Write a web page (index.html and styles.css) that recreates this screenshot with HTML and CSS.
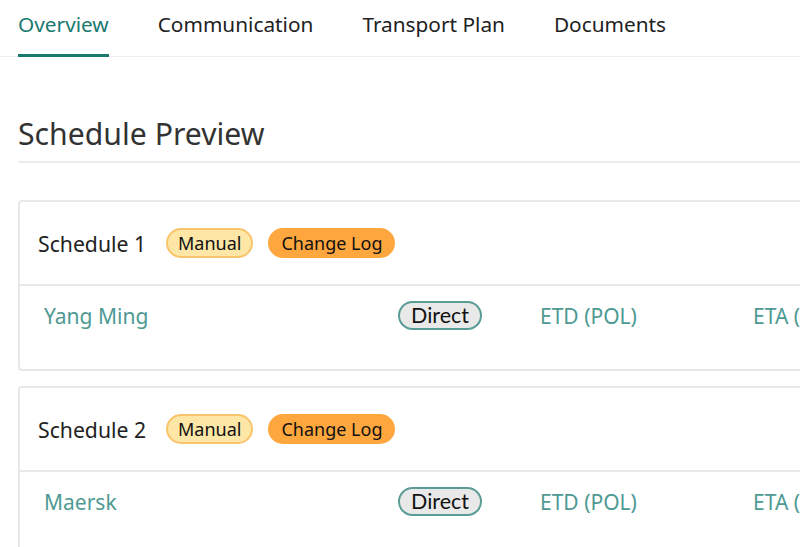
FILE: index.html
```html
<!DOCTYPE html>
<html lang="en">
<head>
<meta charset="utf-8">
<title>Schedule Preview</title>
<link rel="stylesheet" href="styles.css">
</head>
<body>
<div class="page">
  <nav class="tabs">
    <a class="tab active">Overview</a>
    <a class="tab">Communication</a>
    <a class="tab">Transport Plan</a>
    <a class="tab">Documents</a>
  </nav>
  <main class="content">
    <h1 class="title">Schedule Preview</h1>
    <section class="card">
      <header class="card-head">
        <span class="card-name">Schedule 1</span>
        <span class="badge badge-manual">Manual</span>
        <span class="badge badge-log">Change Log</span>
      </header>
      <div class="card-body">
        <span class="carrier">Yang Ming</span>
        <span class="cell"><span class="pill">Direct</span></span>
        <span class="label">ETD (POL)</span>
        <span class="label">ETA (POD)</span>
      </div>
    </section>
    <section class="card">
      <header class="card-head">
        <span class="card-name">Schedule 2</span>
        <span class="badge badge-manual">Manual</span>
        <span class="badge badge-log">Change Log</span>
      </header>
      <div class="card-body">
        <span class="carrier">Maersk</span>
        <span class="cell"><span class="pill">Direct</span></span>
        <span class="label">ETD (POL)</span>
        <span class="label">ETA (POD)</span>
      </div>
    </section>
  </main>
</div>
</body>
</html>
```
FILE: styles.css
```css
html, body {
  margin: 0;
  padding: 0;
  background: #ffffff;
  overflow: hidden;
}
body {
  font-family: "Noto Sans", "Open Sans", sans-serif;
  color: #222;
}
.page {
  width: 1100px;
}
.tabs {
  display: flex;
  gap: 49px;
  padding-left: 18px;
  height: 57px;
  border-bottom: 1px solid #ececec;
  box-sizing: border-box;
}
.tab {
  font-size: 20.8px;
  color: #222;
  padding-top: 11px;
  line-height: 26px;
  height: 57px;
  box-sizing: border-box;
  border-bottom: 3px solid transparent;
  margin-bottom: -1px;
}
.tab.active {
  color: #1a7a70;
  border-bottom-color: #1a7a70;
}
.content {
  padding-left: 18px;
}
.title {
  margin: 0;
  font-weight: 400;
  font-size: 30.2px;
  color: #333;
  line-height: 40px;
  padding-top: 57px;
  padding-bottom: 7px;
  border-bottom: 2px solid #ececec;
  margin-bottom: 37px;
}
.card {
  border: 2px solid #e8e8e8;
  border-radius: 4px;
  margin-bottom: 15px;
}
.card-head {
  display: flex;
  align-items: center;
  gap: 15px;
  height: 82px;
  padding-left: 18px;
  border-bottom: 2px solid #e8e8e8;
}
.card-name {
  font-size: 21.2px;
  color: #222;
  margin-right: 5px;
}
.badge {
  font-size: 18px;
  line-height: 26px;
  padding: 0 10px;
  border-radius: 15px;
  color: #111;
  border: 2px solid transparent;
}
.badge-manual {
  background: #fde6a6;
  border-color: #f8c46c;
}
.badge-log {
  background: #fea73e;
  border-color: #fea73e;
  padding: 0 11px;
}
.card-body {
  display: grid;
  grid-template-columns: 354px 142px 213px 1fr;
  align-items: center;
  padding: 15px 0 39px 24px;
}
.carrier, .label {
  font-size: 21px;
  color: #4e9a93;
}
.pill {
  display: inline-block;
  font-family: "Lato", sans-serif;
  font-size: 21.5px;
  line-height: 25px;
  padding: 0 11px;
  background: #e9e9e9;
  border: 2px solid #5a9c96;
  border-radius: 15px;
  color: #111;
}
```
